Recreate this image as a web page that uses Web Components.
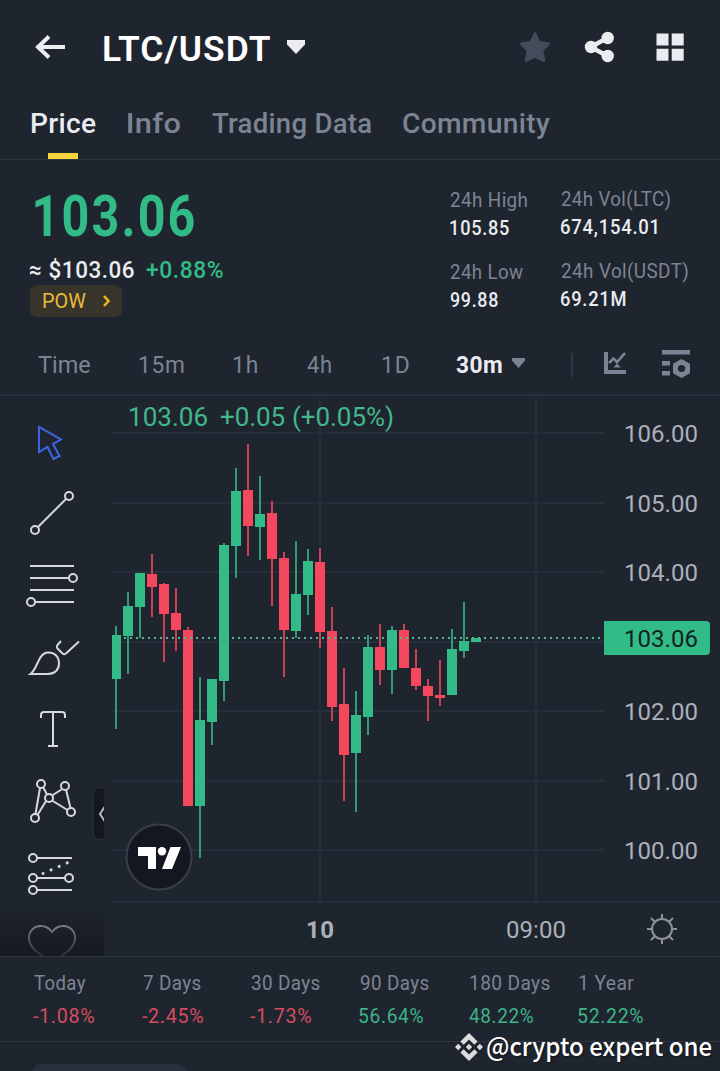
<!DOCTYPE html>
<html lang="en">
<head>
<meta charset="utf-8">
<title>LTC/USDT</title>
<style>
  body {
    margin: 0;
    width: 720px;
    height: 1071px;
    overflow: hidden;
    background: #1f252f;
    font-family: Roboto, 'Liberation Sans', sans-serif;
    --text: #eaecef;
    --muted: #7c8493;
    --line: #2f3641;
    --up: #32bb87;
    --down: #f5475d;
  }
</style>
</head>
<body>
<market-page></market-page>

<script>
class BaseElement extends HTMLElement {
  constructor() {
    super();
    this.attachShadow({ mode: 'open' });
    const template = document.createElement('template');
    template.innerHTML = this.constructor.template();
    this.shadowRoot.append(template.content.cloneNode(true));
  }
}

/**
 * @attr {number} w - width of the visible glyphs in px
 * @attr {number} size - font size in px
 * @attr {number} track - letter spacing in px
 *
 * @summary - one line of text, condensed or widened to fill its width
 */
class FitText extends BaseElement {
  connectedCallback() {
    const span = this.shadowRoot.querySelector('span');
    const width = Number(this.getAttribute('w'));
    this.style.width = `${width}px`;
    this.style.fontSize = `${this.getAttribute('size')}px`;
    this.style.letterSpacing = `${this.getAttribute('track') || 0}px`;

    const style = getComputedStyle(this);
    const context = document.createElement('canvas').getContext('2d');
    context.font = `${style.fontWeight} ${style.fontSize} ${style.fontFamily}`;
    context.letterSpacing = `${this.getAttribute('track') || 0}px`;
    const box = context.measureText(this.text());
    const scale = width / (box.actualBoundingBoxRight + box.actualBoundingBoxLeft);
    span.style.transform = `scaleX(${scale}) translateX(${box.actualBoundingBoxLeft}px)`;
  }

  // A forwarded slot has no text of its own, so read what is assigned to it.
  text() {
    const slot = this.querySelector('slot');
    const nodes = slot ? slot.assignedNodes() : [...this.childNodes];
    return nodes.map((node) => node.textContent).join('').trim();
  }

  static template() {
    return `
    <style>
      :host { display: block; flex: none; white-space: nowrap; line-height: 28px; }
      span { display: inline-block; transform-origin: 0 50%; }
    </style>
    <span><slot></slot></span>
    `;
  }
}

class PairHeader extends BaseElement {
  static template() {
    return `
    <style>
      :host { display: flex; align-items: center; height: 95px; padding: 0 34px 1px; box-sizing: border-box; color: #fff; }
      svg { flex: none; fill: var(--text); }
      fit-text { margin-left: 38px; font-weight: 600; line-height: 40px; padding-top: 6px; }
      .caret { margin-left: 16px; }
      .star { margin-left: auto; fill: #434c5a; stroke: #434c5a; }
      .share { margin-left: 33px; }
      .grid { margin-left: 38px; }
    </style>
    <svg width="32" height="32" viewBox="34 31 32 32"><path d="M49 36.500 38 47l11 10.500M37.500 47H65" fill="none" stroke="#eaecef" stroke-width="4"/></svg>
    <fit-text w="166" size="35" track="1"><slot></slot></fit-text>
    <svg class="caret" width="20" height="32" viewBox="286 31 20 32"><path d="M287 40h18v4.500l-9 9.500-9-9.500z"/></svg>
    <svg class="star" width="32" height="32" viewBox="519 31 32 32"><path d="m535 33.500 4.200 8.800 9.600 1.400-6.600 7 1.800 10.100-9-4.500-9 4.500 1.800-10.100-6.600-7 9.600-1.400z" stroke-width="2.500" stroke-linejoin="round"/></svg>
    <svg class="share" width="32" height="32" viewBox="584 31 32 32"><path d="m607.500 38-17 9 17 9" fill="none" stroke="#eaecef" stroke-width="4.500"/><circle cx="591" cy="47" r="6.200"/><circle cx="607.700" cy="38" r="6.200"/><circle cx="607.700" cy="56" r="6.200"/></svg>
    <svg class="grid" width="32" height="32" viewBox="654 31 32 32"><path d="M656.500 33.500h12v12h-12zM671.700 33.500h12v12h-12zM656.500 48.700h12v12h-12zM671.700 48.700h12v12h-12z"/></svg>
    `;
  }
}

class PageTabs extends BaseElement {
  static template() {
    return `
    <style>
      :host { display: flex; gap: 32px; height: 64px; padding-left: 32px; border-bottom: 1px solid var(--line); color: var(--muted); font-weight: 500; }
      fit-text { line-height: 57px; }
      .active { color: var(--text); }
      .active i { display: block; width: 30px; height: 6px; margin: 1px 0 0 16px; background: #f7d33c; }
    </style>
    <div class="active"><fit-text w="64" size="28" track="0.300">Price</fit-text><i></i></div>
    <fit-text w="52" size="28" track="0.300">Info</fit-text>
    <fit-text w="159" size="28" track="0.300">Trading Data</fit-text>
    <fit-text w="147" size="28" track="0.300">Community</fit-text>
    `;
  }
}

class PriceSummary extends BaseElement {
  static template() {
    return `
    <style>
      :host { display: flex; height: 175px; }
      .left { width: 450px; padding: 28px 0 0 30px; box-sizing: border-box; }
      .price { color: var(--up); font-weight: 700; line-height: 57px; margin-left: 5px; }
      .sub { display: flex; gap: 12px; height: 29px; margin-top: 11px; color: var(--text); font-weight: 500; }
      .sub fit-text { line-height: 29px; }
      .up { color: var(--up); }
      .chip { display: flex; align-items: center; width: 92px; height: 32px; padding-left: 13px; box-sizing: border-box; border-radius: 7px; background: #37352b; color: #e9bb3a; }
      .chip svg { margin-left: 16px; fill: none; stroke: #efb41c; stroke-width: 2.600; }
      .stats { width: 111px; padding-top: 26px; color: var(--muted); }
      .stats.wide { padding-top: 25px; }
      .stats b { display: block; color: var(--text); font-weight: 500; margin-bottom: 16px; }
    </style>
    <div class="left">
      <fit-text class="price" w="159" size="57" track="2.500">103.06</fit-text>
      <div class="sub">
        <fit-text w="104" size="24" track="0.600">≈ $103.06</fit-text>
        <fit-text class="up" w="77" size="24" track="0.600">+0.88%</fit-text>
      </div>
      <div class="chip">
        <fit-text w="43" size="20">POW</fit-text>
        <svg width="10" height="14" viewBox="0 0 10 14"><path d="m2 2 4.500 5L2 12"/></svg>
      </div>
    </div>
    <div class="stats">
      <fit-text w="77" size="20" track="0.400">24h High</fit-text>
      <b><fit-text w="59" size="20" track="0.800">105.85</fit-text></b>
      <fit-text w="73" size="20" track="0.400">24h Low</fit-text>
      <b><fit-text w="48" size="20" track="0.800">99.88</fit-text></b>
    </div>
    <div class="stats wide">
      <fit-text w="109" size="20" track="0.400">24h Vol(LTC)</fit-text>
      <b><fit-text w="96" size="20" track="0.800">674,154.01</fit-text></b>
      <fit-text w="127" size="20" track="0.400">24h Vol(USDT)</fit-text>
      <b><fit-text w="65" size="20" track="0.800">69.21M</fit-text></b>
    </div>
    `;
  }
}

class IntervalBar extends BaseElement {
  static template() {
    return `
    <style>
      :host { display: flex; align-items: center; height: 59px; padding-left: 38px; color: var(--muted); }
      fit-text + fit-text { margin-left: 50px; }
      fit-text + fit-text.day { margin-left: 52px; }
      fit-text + fit-text.current { margin-left: 47px; color: var(--text); font-weight: 700; }
      svg { flex: none; fill: #7b8494; }
      .caret { margin-left: 8px; }
      .sep { width: 2px; height: 24px; margin-left: 43px; background: #323946; }
      .indicator { margin-left: 28px; }
      .settings { margin-left: 31px; }
    </style>
    <fit-text w="52" size="24">Time</fit-text>
    <fit-text w="44" size="24" track="0.800">15m</fit-text>
    <fit-text w="23" size="24" track="0.800">1h</fit-text>
    <fit-text w="24" size="24" track="0.800">4h</fit-text>
    <fit-text class="day" w="26" size="24" track="0.800">1D</fit-text>
    <fit-text class="current" w="46" size="24" track="0.500">30m</fit-text>
    <svg class="caret" width="18" height="32" viewBox="510 349 18 32"><path d="M512 358h13v2.500l-6.500 7.500-6.500-7.500z"/></svg>
    <div class="sep"></div>
    <svg class="indicator" width="28" height="32" viewBox="601 349 28 32"><path d="M604 352h4v18h18v4h-22z"/><path d="m609 363 4.500-4.500 3.500 3.500 8-9" fill="none" stroke="#7b8494" stroke-width="2.600"/><path d="m613.500 367.500 3.500-4 4 4z"/></svg>
    <svg class="settings" width="32" height="32" viewBox="660 349 32 32"><path d="M662 350h28v4.500h-28zM662 361h8v4.500h-8zM662 371h8v4.500h-8z"/><path d="m681.500 359 8.500 4.800v9.400l-8.500 4.800-8.500-4.800v-9.400z"/><circle cx="681.500" cy="368.500" r="3.600" fill="#1f252f"/></svg>
    `;
  }
}

// Every icon lives in a 104x72 cell, drawn in the coordinates of the whole page.
class DrawingTools extends BaseElement {
  static template() {
    return `
    <style>
      :host { display: block; position: relative; width: 104px; height: 560px; padding-top: 10px; box-sizing: border-box; overflow: hidden; }
      svg { display: block; fill: none; stroke: #d5d8de; stroke-width: 2; }
      .cursor { stroke: #3c66e6; }
      .shade { position: absolute; left: 0; bottom: 0; width: 104px; height: 56px; background: linear-gradient(rgba(19, 23, 34, 0), rgba(19, 23, 34, 0.850)); }
      .handle { position: absolute; left: 93px; top: 391px; width: 11px; height: 53px; box-sizing: border-box; border: 1px solid #2a2f3a; border-right: 0; border-radius: 7px 0 0 7px; background: #131722; }
      .handle svg { width: 11px; height: 51px; stroke: #b4b8c0; }
    </style>
    <svg class="cursor" width="104" height="72" viewBox="0 406 104 72"><path d="M39 427v25l8.500-5 6 12 6-3-6.500-12 8-4.500z"/></svg>
    <svg width="104" height="72" viewBox="0 478 104 72"><circle cx="35" cy="530" r="4"/><circle cx="69" cy="496" r="4"/><path d="m38 527 28-28"/></svg>
    <svg width="104" height="72" viewBox="0 550 104 72"><path d="M30 566h44M30 578h39M30 590h44M35 602h39"/><circle cx="73" cy="578" r="4"/><circle cx="31" cy="602" r="4"/></svg>
    <svg width="104" height="72" viewBox="0 622 104 72"><path d="M30.500 674c7-5 8-21 17-21.500 7-.5 11.500 4 11.500 11 0 6-4 10.500-11 10.500zM61 641l-3.500 4c-1 1-.5 3 .5 4l4 4c1.500 1.500 3 1.500 4.500 0L79 641.500"/></svg>
    <svg width="104" height="72" viewBox="0 694 104 72"><path d="M41 718v-3q0-3 3-3h18q3 0 3 3v3M53 712v34M48 746h10"/></svg>
    <svg width="104" height="72" viewBox="0 766 104 72"><path d="m40 788-4.500 26M43 787l4 7.500M52 795.500l9.500-6M46 801l-8.500 14M66 789.500l4.500 18.500M52 800.500l15.500 9.500"/><circle cx="41" cy="784" r="4"/><circle cx="65" cy="786" r="4"/><circle cx="49" cy="798" r="4"/><circle cx="35" cy="818" r="4"/><circle cx="71" cy="812" r="4"/></svg>
    <svg width="104" height="72" viewBox="0 838 104 72"><path d="M37 858h35M37 878h28M37 890h35"/><path d="m43 873.500 26-11.500" stroke-width="3" stroke-dasharray="0.100 8.700" stroke-linecap="round"/><circle cx="33" cy="858" r="4"/><circle cx="33" cy="878" r="4"/><circle cx="33" cy="890" r="4"/><circle cx="69" cy="878" r="4"/></svg>
    <svg width="104" height="72" viewBox="0 910 104 72" opacity="0.850"><path d="m52 932c-3-4-7-6-11-6-7 0-12 5-12 12 0 11 12 16 23 26 11-10 23-15 23-26 0-7-5-12-12-12-4 0-8 2-11 6z"/></svg>
    <div class="shade"></div>
    <div class="handle"><svg viewBox="93 788 11 51"><path d="m103.500 807-4.500 7 4.500 7"/></svg></div>
    `;
  }
}

// [x, high, low, body top, body bottom, direction]
const CANDLES = [
  [116, 626, 729, 635, 679, 'up'],
  [128, 592, 674, 606, 636, 'up'],
  [140, 573, 638, 573, 607, 'up'],
  [152, 554, 617, 574, 587, 'down'],
  [164, 583, 662, 584, 614, 'down'],
  [176, 588, 651, 613, 630, 'down'],
  [188, 627, 806, 630, 806, 'down'],
  [200, 677, 858, 720, 806, 'up'],
  [212, 679, 745, 679, 722, 'up'],
  [224, 543, 701, 545, 681, 'up'],
  [236, 468, 578, 491, 546, 'up'],
  [248, 444, 556, 490, 526, 'down'],
  [260, 476, 560, 514, 527, 'up'],
  [272, 501, 606, 513, 559, 'down'],
  [284, 552, 677, 558, 630, 'down'],
  [296, 541, 638, 594, 631, 'up'],
  [308, 549, 615, 561, 595, 'up'],
  [320, 548, 648, 562, 632, 'down'],
  [332, 607, 721, 631, 707, 'down'],
  [344, 668, 801, 704, 755, 'down'],
  [356, 691, 812, 715, 753, 'up'],
  [368, 635, 735, 647, 717, 'up'],
  [380, 624, 685, 647, 670, 'down'],
  [392, 626, 694, 630, 670, 'up'],
  [404, 624, 668, 630, 668, 'down'],
  [416, 649, 690, 668, 686, 'down'],
  [428, 679, 721, 686, 696, 'down'],
  [440, 660, 706, 695, 698, 'down'],
  [452, 629, 695, 649, 695, 'up'],
  [464, 602, 658, 641, 651, 'up'],
  [476, 638, 642, 638, 642, 'up'],
];

const LEVELS = [
  [433, '106.00'],
  [503, '105.00'],
  [572, '104.00'],
  [642, ''],
  [711, '102.00'],
  [781, '101.00'],
  [850, '100.00'],
];

class CandleChart extends BaseElement {
  static template() {
    const grid = LEVELS.map(([y]) => `<path d="M112 ${y}h492"/>`).join('');
    const labels = LEVELS.filter(([, text]) => text)
      .map(([y, text]) => `<text x="624" y="${y + 9}" textLength="74">${text}</text>`)
      .join('');
    const candles = CANDLES.map(([x, high, low, top, bottom, type]) => {
      const left = Math.max(x - 5, 112);
      return `<g class="${type}">
        <rect x="${x - 1}" y="${high}" width="2" height="${low - high}" opacity="0.800"/>
        <rect x="${left}" y="${top}" width="${x + 5 - left}" height="${bottom - top}"/>
      </g>`;
    }).join('');
    return `
    <style>
      :host { display: block; width: 616px; height: 560px; }
      svg { display: block; }
      .grid { stroke: #282e39; stroke-width: 2; }
      .up { fill: var(--up); }
      .down { fill: var(--down); }
      .labels { fill: #abb0ba; font-size: 24px; }
      .legend { fill: #41b78a; font-size: 26px; }
    </style>
    <svg width="616" height="560" viewBox="104 396 616 560">
      <g class="grid">${grid}<path d="M320 396v506M536 396v506M112 902h608"/></g>
      ${candles}
      <path d="M118 638h486" stroke="#55b890" stroke-width="2" stroke-dasharray="2 4"/>
      <g class="legend">
        <text x="128" y="426" textLength="80">103.06</text>
        <text x="220" y="426" textLength="65">+0.05</text>
        <text x="292" y="426" textLength="102">(+0.05%)</text>
      </g>
      <g class="labels">${labels}
        <text x="506" y="938" textLength="60">09:00</text>
        <text x="306" y="938" textLength="28" font-weight="700">10</text>
      </g>
      <path class="up" d="M604 621h102q4 0 4 4v26q0 4-4 4H604z"/>
      <text x="624" y="647" textLength="74" font-size="24" fill="#10241f">103.06</text>
      <g fill="none" stroke="#8d929d" stroke-width="2">
        <circle cx="662" cy="929" r="10"/>
        <path d="M662 919v-5M662 939v5M652 929h-5M672 929h5M655 922l-4-4M669 922l4-4M655 936l-4 4M669 936l4 4"/>
      </g>
      <circle cx="159" cy="857" r="32.500" fill="#131722" stroke="#3a3e49" stroke-width="2"/>
      <g fill="#fff">
        <path d="M138 847h18v22h-8v-13h-10zM170.500 847H181l-9 22h-10z"/>
        <circle cx="162" cy="851.300" r="4.200"/>
      </g>
    </svg>
    `;
  }
}

class ChangeItem extends BaseElement {
  static template() {
    return `
    <style>
      :host { display: block; height: 84px; padding-top: 12px; box-sizing: border-box; color: var(--muted); }
      div + div { margin: 5px 0 0 -1px; color: #d64c60; }
      :host([up]) div + div { color: #3cb487; }
    </style>
    <div><slot name="label"></slot></div>
    <div><slot></slot></div>
    `;
  }
}

class ChangeRow extends BaseElement {
  static template() {
    return `
    <style>
      :host { display: grid; grid-template-columns: 109px 108px 109px 110px 109px 1fr; padding-left: 33.500px; border: solid var(--line); border-width: 1px 0; }
    </style>
    <change-item><fit-text slot="label" w="52" size="20" track="0.400">Today</fit-text><fit-text w="61" size="20" track="0.700">-1.08%</fit-text></change-item>
    <change-item><fit-text slot="label" w="58" size="20" track="0.400">7 Days</fit-text><fit-text w="61" size="20" track="0.700">-2.45%</fit-text></change-item>
    <change-item><fit-text slot="label" w="69" size="20" track="0.400">30 Days</fit-text><fit-text w="61" size="20" track="0.700">-1.73%</fit-text></change-item>
    <change-item up><fit-text slot="label" w="69" size="20" track="0.400">90 Days</fit-text><fit-text w="64" size="20" track="0.700">56.64%</fit-text></change-item>
    <change-item up><fit-text slot="label" w="80" size="20" track="0.400">180 Days</fit-text><fit-text w="64" size="20" track="0.700">48.22%</fit-text></change-item>
    <change-item up><fit-text slot="label" w="55" size="20" track="0.400">1 Year</fit-text><fit-text w="65" size="20" track="0.700">52.22%</fit-text></change-item>
    `;
  }
}

class WaterMark extends BaseElement {
  static template() {
    return `
    <style>
      :host { display: flex; align-items: center; gap: 4px; position: absolute; right: 8px; bottom: 6px; height: 36px; color: #fff; font-family: 'Noto Sans CJK SC', 'Noto Sans', sans-serif; font-weight: 500; text-shadow: 1px 1px 2px #0008; }
      svg { fill: #dcdcdc; }
      fit-text { line-height: 36px; padding-bottom: 5px; }
    </style>
    <svg width="28" height="28" viewBox="0 0 28 28"><path d="m14 0 8.600 8.600-3.200 3.200L14 6.400l-5.400 5.400-3.200-3.200zM3.200 10.800 6.400 14l-3.200 3.200L0 14zM14 10.800l3.200 3.200-3.200 3.200-3.200-3.200zM24.800 10.800 28 14l-3.200 3.200-3.200-3.200zM14 28l8.600-8.600-3.200-3.200-5.400 5.400-5.400-5.400-3.200 3.200z"/></svg>
    <fit-text w="225" size="25"><slot></slot></fit-text>
    `;
  }
}

class MarketPage extends BaseElement {
  static template() {
    return `
    <style>
      :host { display: block; position: relative; height: 1071px; overflow: hidden; }
      .chart { display: flex; border-top: 2px solid #2a303b; }
      .sheet { width: 154px; height: 30px; margin: 22px 0 0 32px; border-radius: 9px; background: #2a303b; }
    </style>
    <pair-header>LTC/USDT</pair-header>
    <page-tabs></page-tabs>
    <price-summary></price-summary>
    <interval-bar></interval-bar>
    <div class="chart">
      <drawing-tools></drawing-tools>
      <candle-chart></candle-chart>
    </div>
    <change-row></change-row>
    <div class="sheet"></div>
    <water-mark>@crypto expert one</water-mark>
    `;
  }
}

customElements.define('fit-text', FitText);
customElements.define('pair-header', PairHeader);
customElements.define('page-tabs', PageTabs);
customElements.define('price-summary', PriceSummary);
customElements.define('interval-bar', IntervalBar);
customElements.define('drawing-tools', DrawingTools);
customElements.define('candle-chart', CandleChart);
customElements.define('change-item', ChangeItem);
customElements.define('change-row', ChangeRow);
customElements.define('water-mark', WaterMark);
customElements.define('market-page', MarketPage);
</script>
</body>
</html>
